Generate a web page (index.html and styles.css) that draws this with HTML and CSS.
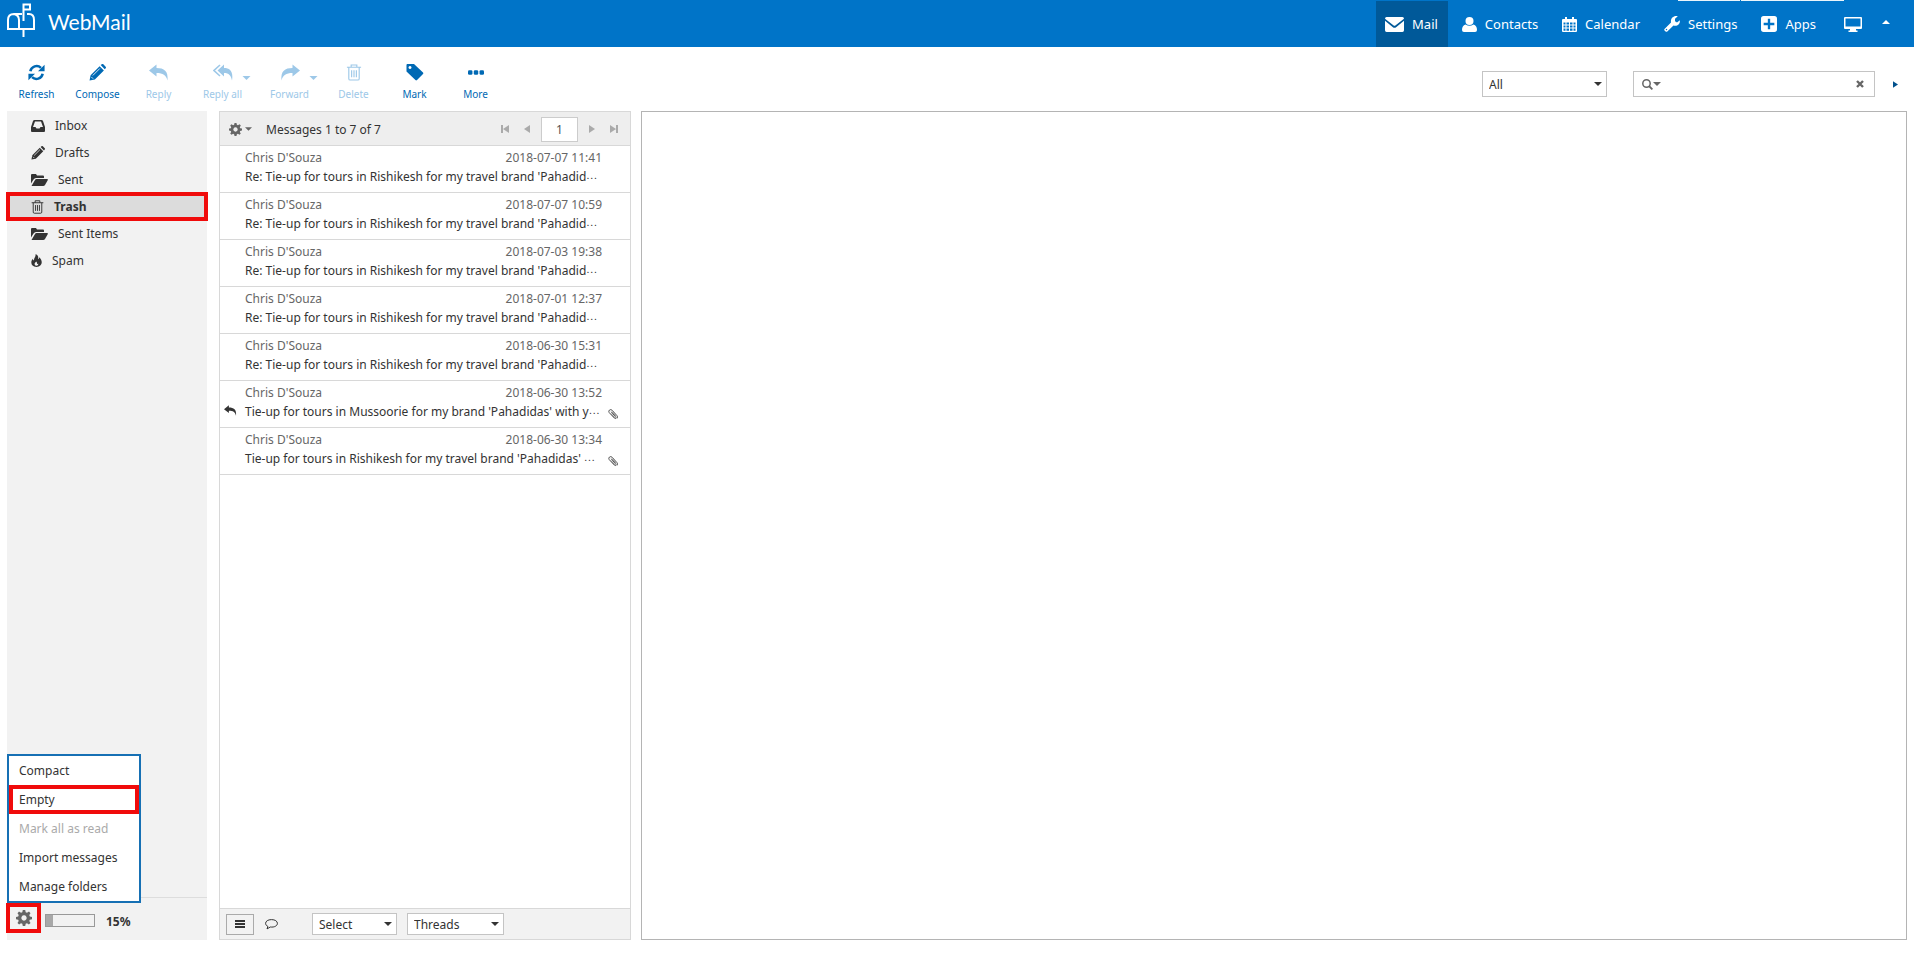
FILE: index.html
```html
<!DOCTYPE html>
<html lang="en">
<head>
  <meta charset="UTF-8">
  <meta name="viewport" content="width=device-width, initial-scale=1">
  <title>WebMail :: Trash</title>
  <link rel="stylesheet" href="styles.css">
</head>
<body>

  <!-- icon sprite -->
  <svg class="sprite" aria-hidden="true">
    <symbol id="i-refresh" viewBox="0 0 16 16">
      <path d="M2.2 6.8a6 6 0 0 1 10-3.2M13.8 9.2a6 6 0 0 1-10 3.2" fill="none" stroke="currentColor" stroke-width="2.4"/>
      <path d="M15.6 0.6v6.2H9.4zM0.4 15.4V9.2h6.2z"/>
    </symbol>
    <symbol id="i-pencil" viewBox="0 0 16 16">
      <path d="M0.5 15.5l1-5L10 2l4 4-8.500 8.500zM11 1l1-.8q.8-.5 1.500.1l2.200 2.200q.6.800 0 1.500l-.9 1z"/>
      <path d="M3.600 10.800l6.600-6.600M2.300 12.300l1.500 1.500" stroke="#fff" stroke-width=".8"/>
    </symbol>
    <symbol id="i-reply" viewBox="0 0 20 16">
      <path d="M0 6L7.500 0v3.500C15 3.500 19.500 6.500 18.500 16 17 10.500 14 8.500 7.500 8.500V12z"/>
    </symbol>
    <symbol id="i-replyall" viewBox="0 0 20 16">
      <path d="M4.500 6L11 0v3.500c6 0 9.500 3.500 8 12.500-1-5-3-7.500-8-7.500V12z"/>
      <path d="M7 .5L1 6l6 5.500" fill="none" stroke="currentColor" stroke-width="1.600"/>
    </symbol>
    <symbol id="i-trash" viewBox="0 0 16 18">
      <path d="M.5 3.500h15M5 3.500V1h6v2.500M2.500 3.500v12q0 1.500 1.500 1.500h8q1.500 0 1.500-1.500v-12M5.500 6.500v7.500M8 6.500v7.500M10.500 6.500v7.500" fill="none" stroke="currentColor" stroke-width="1.200"/>
    </symbol>
    <symbol id="i-tag" viewBox="0 0 18 17">
      <path fill-rule="evenodd" d="M1 0h7l9 8.500q.8.800 0 1.500l-6 6q-.8.800-1.600 0L.5 7.500V.8zM4 2a1.500 1.500 0 1 0 .01 0z"/>
    </symbol>
    <symbol id="i-dots" viewBox="0 0 18 6">
      <rect x="0" y=".5" width="5" height="5" rx="1.500"/><rect x="6.500" y=".5" width="5" height="5" rx="1.500"/><rect x="13" y=".5" width="5" height="5" rx="1.500"/>
    </symbol>
    <symbol id="i-mail" viewBox="0 0 18 14">
      <path d="M1.500 0h15Q18 0 18 1.500L9.800 8q-.8.600-1.600 0L0 1.500Q0 0 1.500 0zM0 3.500l7.500 6q1.500 1 3 0l7.500-6v9q0 1.500-1.500 1.500h-15Q0 14 0 12.500z"/>
    </symbol>
    <symbol id="i-user" viewBox="0 0 15 15">
      <circle cx="7.500" cy="4" r="4"/>
      <path d="M3.500 7.500q4 2.500 8 0Q15 8.500 15 13q0 2-2 2H2q-2 0-2-2 0-4.500 3.500-5.500z"/>
    </symbol>
    <symbol id="i-calendar" viewBox="0 0 15 15">
      <path fill-rule="evenodd" d="M1 2h2V0h2v2h5V0h2v2h2q1 0 1 1v11q0 1-1 1H1q-1 0-1-1V3q0-1 1-1zM1.500 5.500v2h2v-2zm3 0v2h2.500v-2zm3.500 0v2h2.500v-2zm3.500 0v2h2v-2zm-10 3v2h2v-2zm3 0v2h2.500v-2zm3.500 0v2h2.500v-2zm3.500 0v2h2v-2zm-10 3v2.300h2v-2.300zm3 0v2.300h2.500v-2.300zm3.500 0v2.300h2.500v-2.300zm3.500 0v2.300h2v-2.300z"/>
    </symbol>
    <symbol id="i-wrench" viewBox="0 0 16 16">
      <path fill-rule="evenodd" d="M.5 13L7 6.500C6.300 2.500 9.500-.8 13.800.3L11 2.800v2.400l2 1.200 2.800-2.200c.7 3.500-2.500 6.600-6.300 5.300L3.300 15.500q-.9.700-1.700 0L.5 14.500q-.6-.7 0-1.500zM2.500 12.800a.7.700 0 1 0 .01 0z"/>
    </symbol>
    <symbol id="i-plus" viewBox="0 0 15 15">
      <path fill-rule="evenodd" d="M2.500 0h10Q15 0 15 2.500v10q0 2.500-2.500 2.500h-10Q0 15 0 12.500v-10Q0 0 2.500 0zM6.400 2.500v3.900H2.500v2.200h3.900v3.900h2.200V8.600h3.900V6.400H8.600V2.500z"/>
    </symbol>
    <symbol id="i-screen" viewBox="0 0 18 15">
      <path fill-rule="evenodd" d="M1 0h16q1 0 1 1v10q0 1-1 1h-5v1.500h1.500V15h-9v-1.500H6V12H1q-1 0-1-1V1q0-1 1-1zM1.500 1.500v8h15v-8z"/>
    </symbol>
    <symbol id="i-inbox" viewBox="0 0 14 12">
      <path fill-rule="evenodd" d="M3.500 0h7Q11.500 0 12 1l2 6v4q0 1-1 1H1q-1 0-1-1V7l2-6q.5-1 1.500-1zM4 1.500L2 7h2.500l1 1.500h3l1-1.500H12l-2-5.500z"/>
    </symbol>
    <symbol id="i-folder" viewBox="0 0 17 12">
      <path d="M0 9.500V1q0-1 1-1h4l1 1.500h6q1 0 1 1V4H5Q3.500 4 2.500 5.500zM.5 12L4 6q.5-1 1.500-1H16q1.400 0 .7 1.200L14 11q-.6 1-1.800 1z"/>
    </symbol>
    <symbol id="i-fire" viewBox="0 0 12 14">
      <path fill-rule="evenodd" d="M5 0c3.500 1.500 3 4 2.700 5.500Q9 5 9 3.500c5 5 2.500 10.500-3 10.500C0 14-1 8.500 2 5q.3 1.500 1.200 2C3 4 5.500 3 5 0zM5.800 8Q3.500 9.500 4 11.300q.5 1.400 2 1.400 2.500-.3 1.800-2.500-.6.700-1.200.7Q6.900 9.500 5.800 8z"/>
    </symbol>
    <symbol id="i-gear" viewBox="0 0 16 16">
      <path fill-rule="evenodd" d="M6.800 0h2.400l.5 2.200 1.300.6L13 1.600 14.500 3.200l-1.200 1.900.5 1.300 2.200.5v2.300l-2.200.5-.5 1.300 1.200 1.900-1.600 1.600-1.900-1.200-1.300.5L9.200 16H6.800l-.5-2.200-1.300-.5-1.900 1.200-1.600-1.600 1.200-1.900-.5-1.300L0 9.200V6.900l2.200-.5.5-1.300-1.200-1.900L3 1.600l2 1.200 1.300-.6zM8 5.300a2.700 2.700 0 1 0 .01 0z"/>
    </symbol>
    <symbol id="i-down" viewBox="0 0 8 4"><path d="M0 0h8L4 4z"/></symbol>
    <symbol id="i-up" viewBox="0 0 8 4"><path d="M0 4h8L4 0z"/></symbol>
    <symbol id="i-left" viewBox="0 0 6 8"><path d="M6 0v8L0 4z"/></symbol>
    <symbol id="i-right" viewBox="0 0 6 8"><path d="M0 0v8l6-4z"/></symbol>
    <symbol id="i-first" viewBox="0 0 8 8"><path d="M0 0h2v8H0zM8 0v8L2 4z"/></symbol>
    <symbol id="i-last" viewBox="0 0 8 8"><path d="M6 0h2v8H6zM0 0v8l6-4z"/></symbol>
    <symbol id="i-search" viewBox="0 0 11 11">
      <circle cx="4.500" cy="4.500" r="3.700" fill="none" stroke="currentColor" stroke-width="1.500"/><path d="M7 7l3.400 3.400" stroke="currentColor" stroke-width="1.800"/>
    </symbol>
    <symbol id="i-close" viewBox="0 0 8 8"><path d="M1 1l6 6M7 1L1 7" stroke="currentColor" stroke-width="2.400"/></symbol>
    <symbol id="i-list" viewBox="0 0 10 8"><path d="M0 0h10v2H0zM0 3h10v2H0zM0 6h10v2H0z"/></symbol>
    <symbol id="i-comment" viewBox="0 0 13 11">
      <path d="M6.500.6C3 .6.600 2.200.6 4.300c0 1.500 1 2.500 2.300 3.100L2 9.900l3.300-1.900C9.500 8.500 12.400 6.800 12.400 4.300 12.400 2.200 10 .6 6.500.6z" fill="none" stroke="currentColor"/>
    </symbol>
    <symbol id="i-clip" viewBox="0 0 10 11">
      <path d="M3.200 2.800l4.300 5q1 1 .3 1.600t-1.500-.4L1.200 3.600Q.2 2 1.500 1t2.700.3L9 6.700q1 1.500.1 2.700" fill="none" stroke="currentColor"/>
      <path d="M3 4.500l3.500 4M4 2.500l3.800 4.300" stroke="currentColor" stroke-width=".7"/>
    </symbol>
  </svg>

  <header class="topbar">
    <a class="logo" href="#">
      <svg width="28" height="34" viewBox="0 0 28 34">
        <path d="M15 11H7Q1 11 1 17v9h26v-9q0-6-5-6h-2M7 11q5 1 5 6v9M16.500 18V1.500H23v5h-6M16.500 26v8"/>
      </svg>
      <span>WebMail</span>
    </a>
    <nav class="tasks">
      <a class="active" href="#"><svg width="19" height="15"><use href="#i-mail"/></svg>Mail</a>
      <a href="#"><svg width="15" height="15"><use href="#i-user"/></svg>Contacts</a>
      <a href="#"><svg width="15" height="15"><use href="#i-calendar"/></svg>Calendar</a>
      <a href="#"><svg width="16" height="16"><use href="#i-wrench"/></svg>Settings</a>
      <a href="#"><svg width="16" height="16"><use href="#i-plus"/></svg>Apps</a>
      <a class="screen" href="#" aria-label="Display"><svg width="18" height="15"><use href="#i-screen"/></svg></a>
      <a class="fold" href="#" aria-label="Collapse"><svg width="8" height="4"><use href="#i-up"/></svg></a>
    </nav>
    <div class="tab-edge"><i></i><i></i></div>
  </header>

  <div class="toolbar">
    <div class="buttons">
      <button type="button"><svg width="17" height="17"><use href="#i-refresh"/></svg>Refresh</button>
      <button type="button"><svg width="17" height="17"><use href="#i-pencil"/></svg>Compose</button>
      <button type="button" disabled><svg width="20" height="17"><use href="#i-reply"/></svg>Reply</button>
      <button type="button" class="split" disabled><svg width="20" height="17"><use href="#i-replyall"/></svg>Reply all<svg class="caret" width="9" height="4"><use href="#i-down"/></svg></button>
      <button type="button" class="split" disabled><svg class="flip" width="20" height="17"><use href="#i-reply"/></svg>Forward<svg class="caret" width="9" height="4"><use href="#i-down"/></svg></button>
      <button type="button" disabled><svg width="16" height="17"><use href="#i-trash"/></svg>Delete</button>
      <button type="button"><svg width="18" height="17"><use href="#i-tag"/></svg>Mark</button>
      <button type="button"><svg width="16" height="17"><use href="#i-dots"/></svg>More</button>
    </div>
    <div class="search">
      <div class="select filter">
        <select aria-label="Filter"><option>All</option><option>Unread</option><option>Flagged</option></select>
        <svg width="8" height="4"><use href="#i-down"/></svg>
      </div>
      <form class="searchbox">
        <svg width="11" height="11"><use href="#i-search"/></svg>
        <svg width="8" height="4"><use href="#i-down"/></svg>
        <input type="text" aria-label="Search">
        <button type="reset" aria-label="Clear"><svg width="8" height="8"><use href="#i-close"/></svg></button>
      </form>
      <button type="button" class="more" aria-label="Options"><svg width="5" height="7"><use href="#i-right"/></svg></button>
    </div>
  </div>

  <main class="main">
    <aside class="sidebar">
      <ul class="folders">
        <li><a href="#"><svg width="14" height="12"><use href="#i-inbox"/></svg>Inbox</a></li>
        <li><a href="#"><svg width="14" height="14"><use href="#i-pencil"/></svg>Drafts</a></li>
        <li><a href="#"><svg width="17" height="12"><use href="#i-folder"/></svg>Sent</a></li>
        <li class="selected"><a href="#"><svg width="13" height="14"><use href="#i-trash"/></svg>Trash</a></li>
        <li><a href="#"><svg width="17" height="12"><use href="#i-folder"/></svg>Sent Items</a></li>
        <li><a href="#"><svg width="11" height="13"><use href="#i-fire"/></svg>Spam</a></li>
      </ul>
      <div class="quota">
        <button type="button" class="gear" aria-label="Folder actions"><svg width="16" height="16"><use href="#i-gear"/></svg></button>
        <div class="bar"><div style="width: 15%"></div></div>
        <b>15%</b>
        <!-- folder options popup -->
        <ul class="menu">
          <li><a href="#">Compact</a></li>
          <li class="marked"><a href="#">Empty</a></li>
          <li class="off"><a>Mark all as read</a></li>
          <li><a href="#">Import messages</a></li>
          <li><a href="#">Manage folders</a></li>
        </ul>
      </div>
    </aside>

    <section class="list">
      <div class="list-head">
        <button type="button" class="opts" aria-label="List options"><svg width="13" height="13"><use href="#i-gear"/></svg><svg width="7" height="4"><use href="#i-down"/></svg></button>
        <span class="count">Messages 1 to 7 of 7</span>
        <div class="pager">
          <button type="button" aria-label="First"><svg width="8" height="8"><use href="#i-first"/></svg></button>
          <button type="button" aria-label="Previous"><svg width="6" height="8"><use href="#i-left"/></svg></button>
          <input type="text" value="1" aria-label="Page">
          <button type="button" aria-label="Next"><svg width="6" height="8"><use href="#i-right"/></svg></button>
          <button type="button" aria-label="Last"><svg width="8" height="8"><use href="#i-last"/></svg></button>
        </div>
      </div>
      <ul class="messages">
        <li>
          <div class="meta"><span>Chris D'Souza</span><time>2018-07-07 11:41</time></div>
          <div class="subject">Re: Tie-up for tours in Rishikesh for my travel brand 'Pahadid<span class="dots">⋯</span></div>
        </li>
        <li>
          <div class="meta"><span>Chris D'Souza</span><time>2018-07-07 10:59</time></div>
          <div class="subject">Re: Tie-up for tours in Rishikesh for my travel brand 'Pahadid<span class="dots">⋯</span></div>
        </li>
        <li>
          <div class="meta"><span>Chris D'Souza</span><time>2018-07-03 19:38</time></div>
          <div class="subject">Re: Tie-up for tours in Rishikesh for my travel brand 'Pahadid<span class="dots">⋯</span></div>
        </li>
        <li>
          <div class="meta"><span>Chris D'Souza</span><time>2018-07-01 12:37</time></div>
          <div class="subject">Re: Tie-up for tours in Rishikesh for my travel brand 'Pahadid<span class="dots">⋯</span></div>
        </li>
        <li>
          <div class="meta"><span>Chris D'Souza</span><time>2018-06-30 15:31</time></div>
          <div class="subject">Re: Tie-up for tours in Rishikesh for my travel brand 'Pahadid<span class="dots">⋯</span></div>
        </li>
        <li>
          <svg class="replied" width="13" height="11"><use href="#i-reply"/></svg>
          <div class="meta"><span>Chris D'Souza</span><time>2018-06-30 13:52</time></div>
          <div class="subject">Tie-up for tours in Mussoorie for my brand 'Pahadidas' with y<span class="dots">⋯</span></div>
          <svg class="clip" width="10" height="11"><use href="#i-clip"/></svg>
        </li>
        <li>
          <div class="meta"><span>Chris D'Souza</span><time>2018-06-30 13:34</time></div>
          <div class="subject">Tie-up for tours in Rishikesh for my travel brand 'Pahadidas' <span class="dots">⋯</span></div>
          <svg class="clip" width="10" height="11"><use href="#i-clip"/></svg>
        </li>
      </ul>
      <div class="list-foot">
        <button type="button" class="mode on" aria-label="List"><svg width="10" height="8"><use href="#i-list"/></svg></button>
        <button type="button" class="mode" aria-label="Threads"><svg width="13" height="11"><use href="#i-comment"/></svg></button>
        <div class="select pick">
          <select aria-label="Select"><option>Select</option><option>All</option><option>None</option></select>
          <svg width="8" height="4"><use href="#i-down"/></svg>
        </div>
        <div class="select threads">
          <select aria-label="Threads"><option>Threads</option><option>Expand all</option></select>
          <svg width="8" height="4"><use href="#i-down"/></svg>
        </div>
      </div>
    </section>

    <section class="preview"></section>
  </main>

</body>
</html>
```
FILE: styles.css
```css
* {
  box-sizing: border-box;
}
body {
  margin: 0;
  height: 100vh;
  display: flex;
  flex-direction: column;
  background: #fff;
  color: #333;
  font-family: "Noto Sans", "Open Sans", sans-serif;
  font-size: 12px;
  line-height: 19px;
}
a {
  color: inherit;
  text-decoration: none;
}
ul {
  list-style: none;
  margin: 0;
  padding: 0;
}
svg {
  fill: currentColor;
  flex: none;
}
button,
input,
select {
  font: inherit;
  color: inherit;
  background: none;
  border: none;
  margin: 0;
  padding: 0;
}
.sprite {
  position: absolute;
  width: 0;
  height: 0;
}

/* top bar */
.topbar {
  position: relative;
  display: flex;
  justify-content: space-between;
  height: 47px;
  flex: none;
  padding: 0 14px 0 7px;
  background: #0074c8;
  color: #fff;
}
.logo {
  display: flex;
  gap: 13px;
  padding-top: 3px;
  font-family: Lato, sans-serif;
  font-size: 21px;
  line-height: 37px;
}
.logo svg {
  fill: none;
  stroke: currentColor;
  stroke-width: 2;
}
.tasks {
  display: flex;
  padding-top: 1px;
  font-size: 13px;
}
.tasks a {
  display: flex;
  align-items: center;
  gap: 8px;
  padding: 0 10px 0 14px;
}
.tasks a.active {
  padding: 0 10px 0 9px;
  background: #005999;
}
.tasks a.screen {
  padding-left: 18px;
}
.tasks a.fold {
  padding: 0 10px 4px;
}
.tab-edge {
  position: absolute;
  top: 0;
  right: 70px;
  display: flex;
  gap: 1px;
}
.tab-edge i {
  height: 1px;
  width: 103px;
  background: #eaf5fc;
}
.tab-edge i:first-child {
  width: 62px;
}

/* toolbar */
.toolbar {
  display: flex;
  justify-content: space-between;
  flex: none;
  height: 64px;
  padding: 0 16px 0 6px;
}
.buttons {
  display: flex;
  align-items: flex-start;
  padding-top: 17px;
}
.buttons button {
  position: relative;
  display: flex;
  flex-direction: column;
  align-items: center;
  gap: 5px;
  width: 61px;
  font-size: 10px;
  line-height: 16px;
  color: #0069b4;
}
.buttons .split {
  width: 67px;
}
.buttons button:disabled {
  color: #9dc8e8;
}
.buttons .caret {
  position: absolute;
  right: 5px;
  top: 12px;
}
.flip {
  transform: scaleX(-1);
}
.search {
  display: flex;
  align-items: center;
  padding-top: 10px;
}
.select {
  position: relative;
  display: flex;
  align-items: center;
}
.select select {
  appearance: none;
  width: 100%;
  height: 22px;
  padding: 0 6px;
  background: #fff;
  border: 1px solid #c4c4c4;
}
.select svg {
  position: absolute;
  right: 5px;
  pointer-events: none;
}
.filter {
  width: 125px;
  margin-right: 26px;
}
.filter select {
  height: 26px;
}
.searchbox {
  display: flex;
  align-items: center;
  width: 242px;
  height: 26px;
  padding: 0 10px 0 8px;
  border: 1px solid #c4c4c4;
  color: #666;
}
.searchbox input {
  flex: 1;
  min-width: 0;
  outline: none;
}
.searchbox button,
.more {
  display: flex;
}
.more {
  margin-left: 18px;
  color: #00508c;
}

/* panels */
.main {
  display: flex;
  flex: 1;
  min-height: 0;
  padding: 0 7px 18px;
}
.sidebar {
  display: flex;
  flex-direction: column;
  justify-content: space-between;
  width: 200px;
  margin-right: 12px;
  background: #f2f2f2;
}
.folders {
  padding-top: 1px;
}
.folders a {
  display: flex;
  align-items: center;
  gap: 10px;
  height: 27px;
  padding-left: 24px;
}
.folders .selected {
  background: #dcdcdc;
  outline: 4px solid #f00b0b;
  outline-offset: -3px;
  font-weight: bold;
}
.quota {
  position: relative;
  display: flex;
  align-items: center;
  height: 43px;
  border-top: 1px solid #ddd;
}
.gear {
  display: flex;
  align-items: center;
  justify-content: center;
  width: 33px;
  height: 28px;
  margin-bottom: 2px;
  outline: 4px solid #f00b0b;
  outline-offset: -3px;
  color: #666;
}
.bar {
  width: 50px;
  height: 13px;
  margin: 2px 11px 0 5px;
  border: 1px solid #999;
}
.bar div {
  height: 100%;
  background: #a8a8a8;
}
.quota b {
  padding-top: 4px;
}
.menu {
  position: absolute;
  left: 0;
  bottom: 37px;
  width: 134px;
  background: #fff;
  border: 2px solid #1670b4;
}
.menu a {
  display: block;
  padding: 5px 10px;
}
.menu .marked {
  outline: 4px solid #f00b0b;
  outline-offset: -4px;
}
.menu .off {
  color: #aaa;
}

/* message list */
.list {
  display: flex;
  flex-direction: column;
  width: 412px;
  margin-right: 10px;
  border: 1px solid #d8d8d8;
}
.list-head {
  display: flex;
  align-items: center;
  height: 34px;
  padding: 1px 12px 0 9px;
  background: #eee;
  border-bottom: 1px solid #d8d8d8;
}
.opts {
  display: flex;
  align-items: center;
  gap: 3px;
  margin-right: 14px;
  color: #666;
}
.pager {
  display: flex;
  align-items: center;
  gap: 15px;
  margin-left: auto;
  color: #aaa;
}
.pager button {
  display: flex;
}
.pager input {
  width: 37px;
  height: 25px;
  margin: 0 -4px;
  background: #fff;
  border: 1px solid #ccc;
  color: #555;
  text-align: center;
}
.messages {
  flex: 1;
}
.messages li {
  position: relative;
  height: 47px;
  padding: 2px 28px 0 25px;
  border-bottom: 1px solid #d8d8d8;
}
.meta {
  display: flex;
  justify-content: space-between;
  color: #666;
}
.subject {
  white-space: nowrap;
}
.dots {
  font-family: "Noto Sans CJK SC", sans-serif;
  font-size: 10px;
  line-height: 1;
  vertical-align: 2px;
}
.replied {
  position: absolute;
  left: 4px;
  top: 24px;
}
.clip {
  position: absolute;
  right: 12px;
  top: 28px;
  color: #555;
}
.list-foot {
  display: flex;
  align-items: center;
  height: 31px;
  padding: 0 6px;
  background: #f2f2f2;
  border-top: 1px solid #d8d8d8;
}
.mode {
  display: flex;
  align-items: center;
  justify-content: center;
  width: 28px;
  height: 21px;
  margin-right: 3px;
}
.mode.on {
  border: 1px solid #aaa;
}
.pick {
  width: 85px;
  margin: 0 10px 0 24px;
}
.threads {
  width: 97px;
}
.preview {
  flex: 1;
  border: 1px solid #b4b4b4;
}
```
